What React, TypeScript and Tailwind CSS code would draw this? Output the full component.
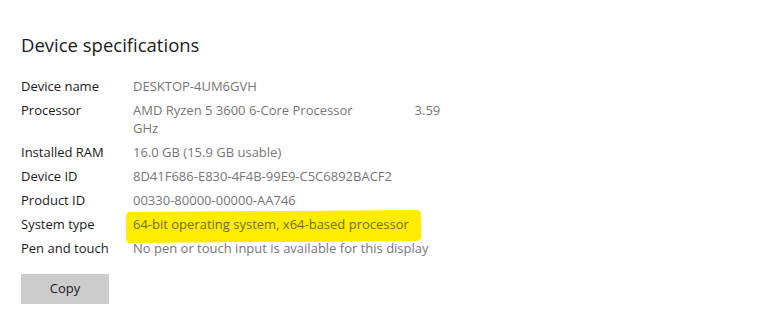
const specs: { label: string; value: React.ReactNode }[] = [
  { label: "Device name", value: "DESKTOP-4UM6GVH" },
  {
    label: "Processor",
    value: (
      <>
        AMD Ryzen 5 3600 6-Core Processor
        <span className="ml-[62px]">3.59</span>
        <br />
        GHz
      </>
    ),
  },
  { label: "Installed RAM", value: "16.0 GB (15.9 GB usable)" },
  { label: "Device ID", value: "8D41F686-E830-4F4B-99E9-C5C6892BACF2" },
  { label: "Product ID", value: "00330-80000-00000-AA746" },
  {
    label: "System type",
    value: (
      <span className="relative inline-block">
        <span className="absolute left-[-7px] right-[-12px] top-[-4px] bottom-[-9px] bg-[#ffec00] rounded-[4px] -rotate-[0.4deg]"></span>
        <span className="relative text-[#6f6f1a]">64-bit operating system, x64-based processor</span>
      </span>
    ),
  },
  { label: "Pen and touch", value: "No pen or touch input is available for this display" },
];

export default function App() {
  return (
    <div className="w-[768px] h-[317px] bg-white pl-[21px] pt-[31px] font-['Open_Sans',sans-serif] overflow-hidden">
      <h2 className="text-[18.5px] leading-[28px] text-[#1a1a1a]">Device specifications</h2>

      <div className="mt-[18px] flex flex-col gap-[6px] text-[13px] leading-[18px]">
        {specs.map((s) => (
          <div key={s.label} className="flex">
            <div className="w-[112px] shrink-0 text-[#1a1a1a]">{s.label}</div>
            <div className="text-[#777777]">{s.value}</div>
          </div>
        ))}
      </div>

      <button className="mt-[17px] w-[88px] h-[30px] bg-[#cccccc] text-[13px] text-[#1a1a1a]">
        Copy
      </button>
    </div>
  );
}
